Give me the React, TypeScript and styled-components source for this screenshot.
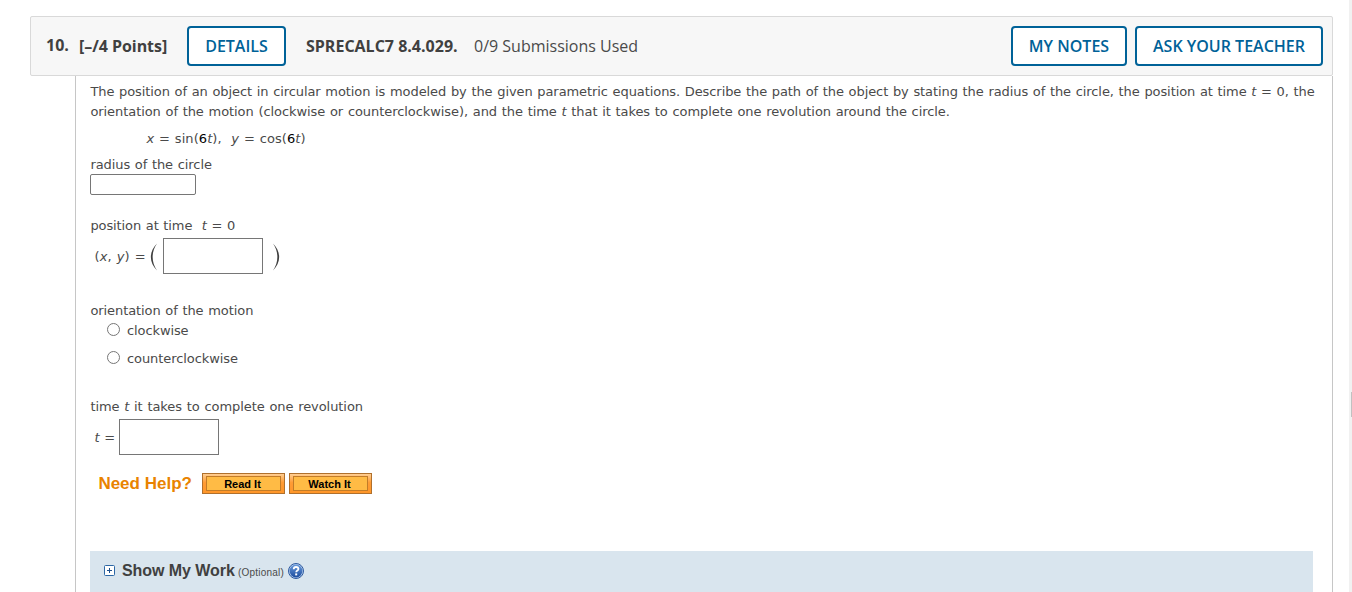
import type { ReactNode } from 'react';
import styled, { createGlobalStyle } from 'styled-components';

const colors = {
  text: '#4a4a4a',
  strong: '#404040',
  blue: '#006298',
  border: '#d9d9d9',
  line: '#c6c6c6',
  header: '#f7f7f7',
  band: '#d9e5ee',
  orange: '#e98300',
};

const GlobalStyle = createGlobalStyle`
  * {
    box-sizing: border-box;
  }

  body {
    margin: 0;
    background: white;
    overflow: hidden;
  }
`;

type LabelProps = {
  $gap?: number;
  $spacing?: number;
}

type HelpButtonProps = {
  children: ReactNode;
}

function HelpButton ({ children }: HelpButtonProps) {
  return (
    <HelpFrame>
      <span>{children}</span>
    </HelpFrame>
  );
}

function ExpandIcon () {
  return (
    <svg width="11" height="11" viewBox="0 0 11 11">
      <rect x="0.5" y="0.5" width="10" height="10" rx="1" fill="#fff" stroke="#2c67a5" />
      <path d="M3 5.5h5M5.5 3v5" stroke="#1d4f8c" />
    </svg>
  );
}

function HelpIcon () {
  return (
    <svg width="16" height="16" viewBox="0 0 16 16">
      <defs>
        <linearGradient id="help" x1="0" y1="0" x2="0" y2="1">
          <stop offset="0" stopColor="#6a9bdc" />
          <stop offset="1" stopColor="#1c4c9e" />
        </linearGradient>
      </defs>
      <circle cx="8" cy="8" r="7.5" fill="#b9cfec" stroke="#2d5aa0" />
      <circle cx="8" cy="8" r="6.4" fill="url(#help)" />
      <path d="M5.7 6.2C5.8 4.7 6.7 4 8 4c1.4 0 2.4.8 2.4 2 0 1.6-2.2 1.6-2.2 3.3" fill="none" stroke="#fff" strokeWidth="1.8" />
      <rect x="7.2" y="10.4" width="2" height="2" fill="#fff" />
    </svg>
  );
}

function App () {
  return (
    <Page>
      <GlobalStyle />
      <Question>
        <Header>
          <Number>10.</Number>
          <Points>[–/4 Points]</Points>
          <HeaderButton $width={99}>DETAILS</HeaderButton>
          <Code>SPRECALC7 8.4.029.</Code>
          <Submissions>0/9 Submissions Used</Submissions>
          <HeaderButton $width={116}>MY NOTES</HeaderButton>
          <HeaderButton $width={188}>ASK YOUR TEACHER</HeaderButton>
        </Header>

        <Content>
          <Label $gap={5} $spacing={-0.082}>
            The position of an object in circular motion is modeled by the given parametric equations. Describe the path of the object by stating the radius of the circle, the position at time <i>t</i> = 0, the
          </Label>
          <Label $spacing={-0.065}>
            orientation of the motion (clockwise or counterclockwise), and the time <i>t</i> that it takes to complete one revolution around the circle.
          </Label>
          <Equation $gap={7} $spacing={0.06}>
            <i>x</i> = sin(<b>6</b><i>t</i>),&nbsp; <i>y</i> = cos(<b>6</b><i>t</i>)
          </Equation>

          <Label $gap={6}>radius of the circle</Label>
          <TextInput />

          <Label $gap={20} $spacing={-0.1}>position at time&nbsp; <i>t</i> = 0</Label>
          <MathRow>
            <MathLabel $width={52} $spacing={0.16}>(<i>x</i>, <i>y</i>) =</MathLabel>
            <Paren viewBox="0 0 8 28"><path d="M7 .5C-1.2 8.5-1.2 19.5 7 27.5C1.2 19 1.2 9 7 .5Z" /></Paren>
            <MathInput />
            <Paren $close viewBox="0 0 8 28"><path d="M1 .5C9.2 8.5 9.2 19.5 1 27.5C6.8 19 6.8 9 1 .5Z" /></Paren>
          </MathRow>

          <Label $gap={26}>orientation of the motion</Label>
          <Option>
            <Radio name="orientation" />
            <Label $spacing={-0.1}>clockwise</Label>
          </Option>
          <Option $gap={8}>
            <Radio name="orientation" />
            <Label>counterclockwise</Label>
          </Option>

          <Label $gap={28} $spacing={-0.06}>time <i>t</i> it takes to complete one revolution</Label>
          <MathRow>
            <MathLabel $width={20}><i>t</i> =</MathLabel>
            <MathInput />
          </MathRow>

          <Help>
            <HelpTitle>Need Help?</HelpTitle>
            <HelpButton>Read It</HelpButton>
            <HelpButton>Watch It</HelpButton>
          </Help>

          <Work>
            <ExpandIcon />
            <WorkTitle>Show My Work</WorkTitle>
            <Optional>(Optional)</Optional>
            <HelpIcon />
          </Work>
        </Content>
      </Question>
      <Scrollbar>
        <Thumb />
      </Scrollbar>
    </Page>
  );
}

const Page = styled.div`
  display: flex;
  justify-content: space-between;
  height: 592px;
  overflow: hidden;
  color: ${colors.text};
`;

const Question = styled.section`
  display: flex;
  flex-direction: column;
  width: 1303px;
  margin: 16px 0 0 30px;
`;

const Header = styled.header`
  display: flex;
  align-items: center;
  flex: none;
  height: 60px;
  padding: 0 9px 0 15px;
  border: 1px solid ${colors.border};
  border-radius: 2px;
  background: ${colors.header};
  font: 16px/22px 'Open Sans', sans-serif;
  white-space: nowrap;
`;

const Number = styled.span`
  width: 33px;
  padding-bottom: 2px;
  color: ${colors.strong};
  font-weight: 700;
`;

const Points = styled.span`
  width: 108px;
  color: ${colors.strong};
  font-weight: 700;
  letter-spacing: -0.05px;
`;

const HeaderButton = styled.button<{ $width: number }>`
  width: ${(props) => props.$width}px;
  height: 40px;
  padding: 0;
  border: 2px solid ${colors.blue};
  border-radius: 4px;
  background: white;
  color: ${colors.blue};
  font: 600 16px/22px 'Open Sans', sans-serif;

  & + & {
    margin-left: 8px;
  }
`;

const Code = styled.span`
  width: 168px;
  margin-left: 20px;
  color: ${colors.strong};
  font-weight: 700;
`;

const Submissions = styled.span`
  flex: 1;
`;

const Content = styled.div`
  flex: 1;
  margin-left: 45px;
  padding: 0 19px 0 14px;
  border: solid ${colors.line};
  border-width: 0 1px;
`;

const Label = styled.div<LabelProps>`
  height: 20px;
  margin-top: ${(props) => props.$gap ?? 0}px;
  font: 13px/22px Verdana, 'DejaVu Sans', sans-serif;
  letter-spacing: ${(props) => props.$spacing ?? -0.08}px;
  word-spacing: 0.67px;
  text-indent: 0.4px;
  white-space: nowrap;
`;

const Equation = styled(Label)`
  padding-left: 56px;

  b {
    color: black;
    font-weight: 400;
  }
`;

const MathLabel = styled(Label)<{ $width: number }>`
  width: ${(props) => props.$width}px;
`;

const TextInput = styled.input`
  display: block;
  width: 106px;
  height: 21px;
  border: 1px solid #767676;
  border-radius: 2px;
`;

const MathRow = styled.div`
  display: flex;
  align-items: center;
  height: 36px;
  margin-top: 3px;
  padding-left: 4px;
`;

const MathInput = styled.input`
  width: 100px;
  height: 36px;
  margin-left: 5px;
  border: 1px solid #767676;
`;

const Paren = styled.svg<{ $close?: boolean }>`
  width: 8px;
  height: 28px;
  margin: 2px 0 0 ${(props) => props.$close ? 9 : 4}px;
  fill: ${colors.strong};
`;

const Option = styled.label<LabelProps>`
  display: flex;
  height: 20px;
  margin-top: ${(props) => props.$gap ?? 0}px;
  padding-left: 17px;

  ${Label} {
    text-indent: 0;
  }
`;

const Radio = styled.input.attrs({ type: 'radio' })`
  width: 13px;
  height: 13px;
  margin: 3px 7px 0 0;
`;

const Help = styled.div`
  display: flex;
  align-items: center;
  height: 21px;
  margin-top: 18px;
  padding-left: 8px;
`;

const HelpTitle = styled.span`
  width: 104px;
  color: ${colors.orange};
  font: 700 17px/20px 'Liberation Sans', sans-serif;
  text-indent: 0.4px;
`;

const HelpFrame = styled.button`
  display: flex;
  width: 83px;
  height: 21px;
  margin-right: 4px;
  padding: 2px 3px;
  border: 1px solid #b0702c;
  background: linear-gradient(#ffce92, #ff9c35 45%, #ff9629);

  span {
    flex: 1;
    height: 15px;
    padding-right: 2px;
    border: 1px solid #c27c28;
    background: #ffbb45;
    color: black;
    font: 700 11px/15px 'Liberation Sans', sans-serif;
  }
`;

const Work = styled.div`
  display: flex;
  align-items: center;
  height: 41px;
  margin-top: 57px;
  padding: 0 0 2px 14px;
  background: ${colors.band};
`;

const WorkTitle = styled.span`
  width: 116px;
  margin-left: 7px;
  color: ${colors.strong};
  font: 700 16px/20px 'Liberation Sans', sans-serif;
  letter-spacing: -0.06px;
`;

const Optional = styled.span`
  width: 50px;
  margin-top: 4px;
  font: 10px/14px 'Liberation Sans', sans-serif;
  letter-spacing: 0.2px;
`;

const Scrollbar = styled.div`
  width: 3px;
  padding: 392px 0 0 2px;
  background: #f1f1f1;
`;

const Thumb = styled.div`
  height: 25px;
  background: #c1c1c1;
`;

export default App;
